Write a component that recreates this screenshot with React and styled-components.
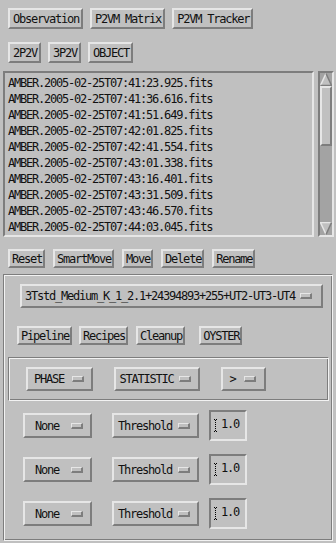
import React from 'react';
import styled, { createGlobalStyle, css } from 'styled-components';

const GlobalStyle = createGlobalStyle`
  body {
    margin: 0;
    background: #c0c0c0;
  }
`;

const LIGHT = '#e6e6e6';
const DARK = '#7d7d7d';

const raised = css`
  border: 2px solid;
  border-color: ${LIGHT} ${DARK} ${DARK} ${LIGHT};
`;

const sunken = css`
  border: 2px solid;
  border-color: ${DARK} ${LIGHT} ${LIGHT} ${DARK};
`;

const groove = css`
  border: 1px solid;
  border-color: ${DARK} #f2f2f2 #f2f2f2 ${DARK};
  box-shadow: inset 1px 1px #f2f2f2, inset -1px -1px ${DARK};
`;

const fixedFont = css`
  font-family: "DejaVu Sans Mono", "Liberation Mono", monospace;
  font-size: 12px;
  letter-spacing: -1.22px;
  color: #111;
`;

const Screen = styled.div`
  width: 336px;
  height: 543px;
  overflow: hidden;
  background: #c0c0c0;
  padding-top: 8px;
  box-sizing: border-box;
  ${fixedFont}
`;

const ButtonRow = styled.div`
  display: flex;
  gap: ${(p) => p.$gap ?? 7}px;
  padding-left: ${(p) => p.$left ?? 8}px;
  margin-top: ${(p) => p.$top ?? 0}px;
`;

const Button = styled.div`
  ${raised}
  box-sizing: border-box;
  height: ${(p) => (p.$small ? 19 : 21)}px;
  padding: ${(p) => (p.$small ? '0 1px 0 2px' : '0 2px 0 3px')};
  display: flex;
  align-items: center;
  white-space: pre;
  margin-left: ${(p) => p.$ml || 0}px;
`;

const ListPane = styled.div`
  display: flex;
  gap: 4px;
  margin-top: 8px;
  padding-left: 3px;
`;

const ListBox = styled.div`
  ${sunken}
  width: 311px;
  height: 166px;
  box-sizing: border-box;
  padding: 2px 3px;
  overflow: hidden;
`;

const ListItem = styled.div`
  height: 16px;
  line-height: 16px;
  white-space: pre;
`;

const ScrollBar = styled.div`
  ${sunken}
  width: 16px;
  height: 166px;
  box-sizing: border-box;
  background: #a3a3a3;
  display: flex;
  flex-direction: column;
`;

const Slider = styled.div`
  ${raised}
  height: 56px;
  background: #c0c0c0;
`;

const Spacer = styled.div`
  flex: 1;
`;

const Frame = styled.div`
  ${groove}
  box-sizing: border-box;
  margin: ${(p) => p.$margin};
  height: ${(p) => p.$h}px;
  padding: ${(p) => p.$pad};
`;

const OptionMenu = styled.div`
  ${raised}
  box-sizing: border-box;
  width: ${(p) => p.$w}px;
  height: ${(p) => p.$h || 24}px;
  margin-left: ${(p) => p.$ml || 0}px;
  display: flex;
  align-items: center;
  white-space: pre;
`;

const OptionLabel = styled.span`
  flex: 1;
  text-align: center;
`;

const Indicator = styled.span`
  border: 1px solid;
  border-color: ${LIGHT} ${DARK} ${DARK} ${LIGHT};
  border-right-width: 2px;
  border-bottom-width: 2px;
  width: 9px;
  height: 3px;
  margin: 0 ${(p) => p.$mr || 7}px 0 2px;
  flex: none;
`;

const OptionRow = styled.div`
  display: flex;
  gap: 21px;
`;

const FilterList = styled.div`
  margin-left: -10px;
`;

const FilterRow = styled.div`
  display: flex;
  align-items: center;
  padding-left: 13px;
  margin-top: ${(p) => p.$top}px;
`;

const Entry = styled.div`
  ${sunken}
  box-sizing: border-box;
  width: 38px;
  height: 31px;
  margin-left: 10px;
  display: flex;
  align-items: flex-start;
  padding: 5px 0 0 3px;
  gap: 4px;
`;

const UpArrow = () => (
  <svg width="12" height="13" viewBox="0 0 12 13" style={{ display: 'block' }}>
    <polygon points="6,0.5 11.5,12.5 0.5,12.5" fill="#c0c0c0" />
    <polyline points="0.5,12.5 6,0.5" fill="none" stroke={LIGHT} strokeWidth="1.5" />
    <polyline points="6,0.5 11.5,12.5 0.5,12.5" fill="none" stroke={DARK} strokeWidth="1.5" />
  </svg>
);

const DownArrow = () => (
  <svg width="12" height="13" viewBox="0 0 12 13" style={{ display: 'block' }}>
    <polygon points="0.5,0.5 11.5,0.5 6,12.5" fill="#c0c0c0" />
    <polyline points="6,12.5 0.5,0.5 11.5,0.5" fill="none" stroke={LIGHT} strokeWidth="1.5" />
    <polyline points="11.5,0.5 6,12.5" fill="none" stroke={DARK} strokeWidth="1.5" />
  </svg>
);

const Cursor = () => (
  <svg width="3" height="13" viewBox="0 0 3 13" style={{ display: 'block', marginTop: 2 }}>
    <rect x="0" y="0" width="1" height="1" fill="#000" />
    <rect x="2" y="0" width="1" height="1" fill="#000" />
    <line x1="1.5" y1="1" x2="1.5" y2="12" stroke="#000" strokeWidth="1" strokeDasharray="1 1" />
    <rect x="0" y="12" width="1" height="1" fill="#000" />
    <rect x="2" y="12" width="1" height="1" fill="#000" />
  </svg>
);

const files = [
  '41:23.925',
  '41:36.616',
  '41:51.649',
  '42:01.825',
  '42:41.554',
  '43:01.338',
  '43:16.401',
  '43:31.509',
  '43:46.570',
  '44:03.045',
];

const FilterLine = ({ top }) => (
  <FilterRow $top={top}>
    <OptionMenu $w={69} $h={25}>
      <OptionLabel>None</OptionLabel>
      <Indicator $mr={7} />
    </OptionMenu>
    <OptionMenu $w={87} $h={25} $ml={20}>
      <OptionLabel>Threshold</OptionLabel>
      <Indicator $mr={7} />
    </OptionMenu>
    <Entry>
      <Cursor />
      <span>1.0</span>
    </Entry>
  </FilterRow>
);

export default function App() {
  return (
    <>
      <GlobalStyle />
      <Screen>
        <ButtonRow>
          <Button>Observation</Button>
          <Button>P2VM Matrix</Button>
          <Button>P2VM Tracker</Button>
        </ButtonRow>
        <ButtonRow $top={13}>
          <Button>2P2V</Button>
          <Button>3P2V</Button>
          <Button>OBJECT</Button>
        </ButtonRow>

        <ListPane>
          <ListBox>
            {files.map((t) => (
              <ListItem key={t}>AMBER.2005-02-25T07:{t}.fits</ListItem>
            ))}
          </ListBox>
          <ScrollBar>
            <UpArrow />
            <Slider />
            <Spacer />
            <DownArrow />
          </ScrollBar>
        </ListPane>

        <ButtonRow $top={12} $gap={8}>
          <Button $small>Reset</Button>
          <Button $small>SmartMove</Button>
          <Button $small>Move</Button>
          <Button $small>Delete</Button>
          <Button $small>Rename</Button>
        </ButtonRow>

        <Frame $margin="6px 3px 0 3px" $h={267} $pad="9px 0 0 16px">
          <OptionMenu $w={303}>
            <OptionLabel>3Tstd_Medium_K_1_2.1+24394893+255+UT2-UT3-UT4</OptionLabel>
            <Indicator $mr={9} />
          </OptionMenu>

          <ButtonRow $top={18} $left={0} $gap={7}>
            <Button $small $ml={-3}>Pipeline</Button>
            <Button $small>Recipes</Button>
            <Button $small $ml={1}>Cleanup</Button>
            <Button $small $ml={7}>OYSTER</Button>
          </ButtonRow>

          <Frame $margin="12px 3px 0 -12px" $h={44} $pad="9px 0 0 17px">
            <OptionRow>
              <OptionMenu $w={67}>
                <OptionLabel>PHASE</OptionLabel>
                <Indicator $mr={7} />
              </OptionMenu>
              <OptionMenu $w={86}>
                <OptionLabel>STATISTIC</OptionLabel>
                <Indicator $mr={7} />
              </OptionMenu>
              <OptionMenu $w={45}>
                <OptionLabel>&gt;</OptionLabel>
                <Indicator $mr={8} />
              </OptionMenu>
            </OptionRow>
          </Frame>

          <FilterList>
            <FilterLine top={9} />
            <FilterLine top={13} />
            <FilterLine top={13} />
          </FilterList>
        </Frame>
      </Screen>
    </>
  );
}
